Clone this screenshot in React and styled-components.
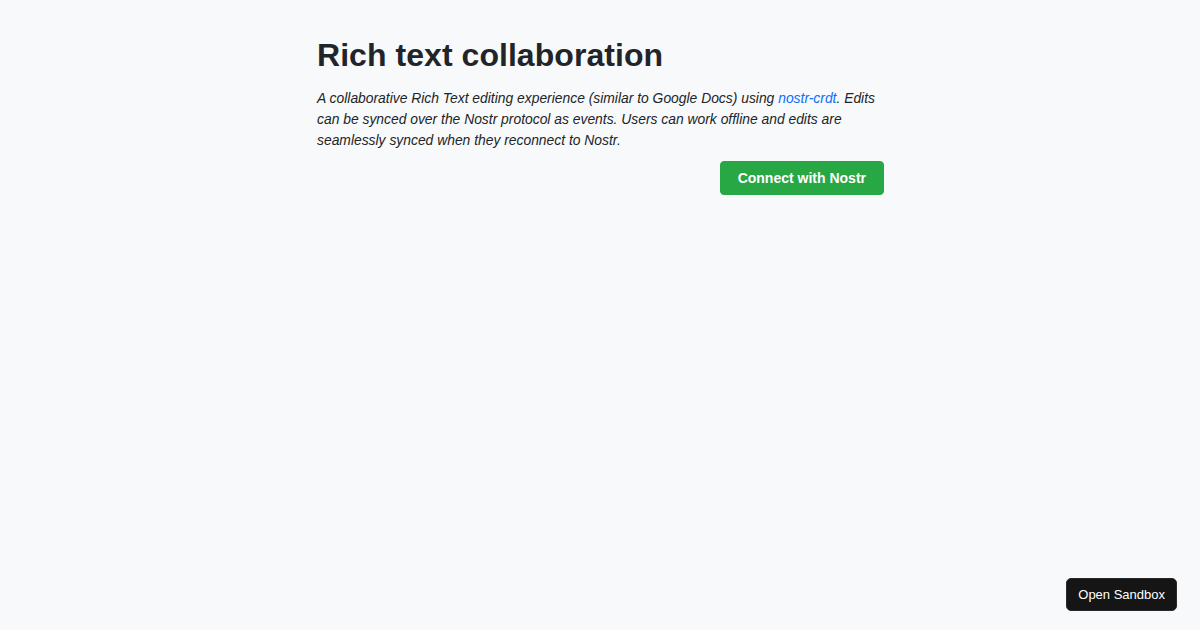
import React from 'react';
import styled, { createGlobalStyle } from 'styled-components';

const GlobalStyle = createGlobalStyle`
  html, body {
    margin: 0;
    padding: 0;
    background: #f8f9fa;
    font-family: "Liberation Sans", Arial, sans-serif;
    color: #212529;
  }
`;

const Page = styled.div`
  min-height: 100vh;
`;

const Container = styled.main`
  max-width: 600px;
  margin: 0 auto;
  padding: 36px 16px 0 17px;
  box-sizing: border-box;
  display: flex;
  flex-direction: column;
`;

const Title = styled.h1`
  margin: 0 0 14px;
  font-size: 32px;
  font-weight: 700;
  line-height: 1.2;
  letter-spacing: 0.05px;
  color: #212529;
`;

const Intro = styled.p`
  margin: 0 0 10px;
  font-size: 13.86px;
  line-height: 21px;
  font-style: italic;
`;

const Link = styled.a`
  color: #0d6efd;
  text-decoration: none;
`;

const Actions = styled.div`
  display: flex;
  justify-content: flex-end;
`;

const ConnectButton = styled.button`
  font-family: inherit;
  font-size: 14px;
  font-weight: 700;
  color: #fff;
  background: #28a745;
  border: 1px solid #28a745;
  border-radius: 4px;
  height: 34px;
  padding: 0 17px;
  cursor: pointer;
`;

const SandboxButton = styled.button`
  position: fixed;
  right: 23px;
  bottom: 19px;
  height: 33px;
  padding: 0 11px;
  background: #151515;
  color: #fff;
  border: 1px solid #2a2a2a;
  border-radius: 5px;
  font-family: "Liberation Sans", Arial, sans-serif;
  font-size: 13px;
  cursor: pointer;
`;

const App = () => (
  <Page>
    <GlobalStyle />
    <Container>
      <Title>Rich text collaboration</Title>
      <Intro>
        A collaborative Rich Text editing experience (similar to Google Docs) using{' '}
        <Link href="#">nostr-crdt</Link>. Edits can be synced over the Nostr protocol as
        events. Users can work offline and edits are seamlessly synced when they reconnect to
        Nostr.
      </Intro>
      <Actions>
        <ConnectButton>Connect with Nostr</ConnectButton>
      </Actions>
    </Container>
    <SandboxButton>Open Sandbox</SandboxButton>
  </Page>
);

export default App;
